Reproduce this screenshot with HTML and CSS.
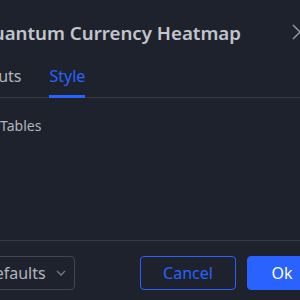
FILE: index.html
```html
<!DOCTYPE html>
<html>
<head>
<meta charset="utf-8">
<link rel="stylesheet" href="styles.css">
</head>
<body>
<div class="dialog">
  <div class="header">
    <div class="title">Quantum Currency Heatmap</div>
    <button class="close" aria-label="Close">
      <svg width="16" height="16" viewBox="0 0 16 16"><path d="M1 1l14 14M15 1L1 15" stroke="currentColor" stroke-width="1.5" fill="none"/></svg>
    </button>
  </div>
  <div class="tabs">
    <div class="tab">Inputs</div>
    <div class="tab active">Style</div>
  </div>
  <div class="content">
    <label class="check-row"><span class="checkbox"></span><span class="check-label">Tables</span></label>
  </div>
  <div class="footer">
    <div class="select">Defaults
      <svg width="10" height="6" viewBox="0 0 10 6"><path d="M1 1l4 4 4-4" stroke="currentColor" stroke-width="1.3" fill="none"/></svg>
    </div>
    <div class="spacer"></div>
    <button class="btn btn-outline">Cancel</button>
    <button class="btn btn-primary">Ok</button>
  </div>
</div>
</body>
</html>
```
FILE: styles.css
```css
html, body {
  margin: 0;
  padding: 0;
  background: #1e222d;
  width: 300px;
  height: 300px;
  overflow: hidden;
}
.dialog {
  margin-left: -40px;
  width: 360px;
  font-family: "Noto Sans", "Open Sans", sans-serif;
  color: #d1d4dc;
}
.header {
  height: 64px;
  display: flex;
  align-items: center;
  padding-left: 25px;
}
.title {
  flex: 1;
  font-size: 18.7px;
  font-weight: 600;
  color: #c3c5cc;
  white-space: nowrap;
  margin-left: -7px;
}
.close {
  background: none;
  border: 0;
  padding: 0;
  width: 16px;
  height: 16px;
  color: #9598a1;
  margin-right: 12px;
  display: block;
}
.close svg { display: block; }
.tabs {
  height: 33px;
  display: flex;
  border-bottom: 1px solid #363a45;
  padding-left: 13px;
  gap: 28px;
  align-items: stretch;
}
.tab {
  font-size: 16px;
  color: #b2b5be;
  padding-top: 1px;
  position: relative;
  box-sizing: border-box;
}
.tab.active {
  color: #2962ff;
}
.tab.active::after {
  content: "";
  position: absolute;
  left: 0;
  right: 0;
  bottom: -1px;
  height: 3px;
  background: #2962ff;
}
.content {
  height: 143px;
  padding-left: 17px;
  padding-top: 18px;
  box-sizing: border-box;
  border-bottom: 1px solid #363a45;
}
.check-row {
  display: flex;
  align-items: center;
  gap: 7px;
}
.checkbox {
  width: 16px;
  height: 16px;
  box-sizing: border-box;
  border: 1px solid #50535e;
  border-radius: 3px;
}
.check-label {
  font-size: 14px;
  color: #b2b5be;
}
.footer {
  display: flex;
  align-items: center;
  padding-top: 15px;
  padding-left: 0;
}
.select {
  height: 34px;
  width: 115px;
  box-sizing: border-box;
  border: 1px solid #434651;
  border-radius: 4px;
  display: flex;
  align-items: center;
  justify-content: space-between;
  padding: 0 8px 0 22px;
  font-size: 16px;
  color: #b2b5be;
}
.select svg { color: #787b86; }
.spacer { width: 65px; }
.btn {
  height: 34px;
  box-sizing: border-box;
  border-radius: 4px;
  font-family: inherit;
  font-size: 16px;
  padding: 0;
}
.btn-outline {
  width: 96px;
  background: transparent;
  border: 1px solid #2962ff;
  color: #2962ff;
}
.btn-primary {
  margin-left: 11px;
  width: 70px;
  background: #2962ff;
  border: 1px solid #2962ff;
  color: #ffffff;
}
```
